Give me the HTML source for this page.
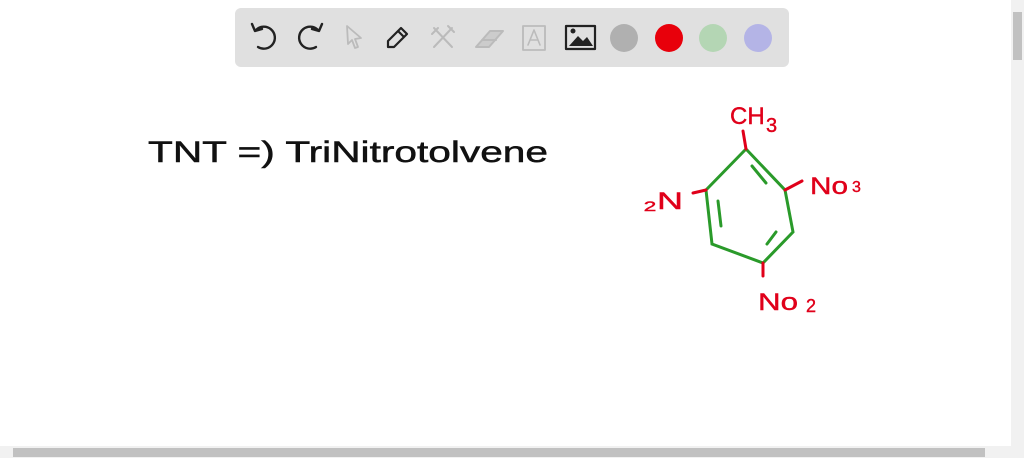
<!DOCTYPE html>
<html><head><style>
body{margin:0;width:1024px;height:458px;background:#fff;overflow:hidden;position:relative;font-family:"Liberation Sans",sans-serif}
.tb{position:absolute;left:235px;top:8px;width:554px;height:59px;background:#e0e0e0;border-radius:6px}
.vs{position:absolute;left:1011px;top:0;width:13px;height:446px;background:#f1f1f1}
.vt{position:absolute;left:1013px;top:12px;width:9px;height:48px;background:#c1c1c1}
.hs{position:absolute;left:0;top:446px;width:1024px;height:12px;background:#f1f1f1}
.ht{position:absolute;left:13px;top:448px;width:972px;height:9px;background:#c1c1c1}
</style></head><body>
<div class="tb"></div>
<svg width="1024" height="458" style="position:absolute;left:0;top:0">
<g fill="none" stroke-linecap="round" stroke-linejoin="round">
<path d="M256 30 A11 11 0 1 1 258 47" stroke="#222" stroke-width="2.4"/>
<path d="M252 24 L255 31 L262 29" stroke="#222" stroke-width="2.4"/>
<path d="M318 30 A11 11 0 1 0 316 47" stroke="#222" stroke-width="2.4"/>
<path d="M322 24 L319 31 L312 29" stroke="#222" stroke-width="2.4"/>
<path d="M347 26 L361 38 L355 39 L358 47 L355 48 L352 40 L348 44 Z" stroke="#bbb" stroke-width="1.8"/>
<path d="M388 47 L388 41 L401 28 L407 34 L394 47 Z M398 31 L404 37" stroke="#222" stroke-width="2.2"/>
<path d="M434 28 L452 47 M452 28 L434 47 M448 26 L454 32 M432 34 L438 28" stroke="#bbb" stroke-width="2"/>
<path d="M476 47 L490 31 L503 31 L489 47 Z M482 40 L496 40" stroke="#bbb" stroke-width="2" fill="#ccc"/>
<rect x="523" y="26" width="22" height="24" stroke="#bbb" stroke-width="1.8"/>
<path d="M528 45 L534 30 L540 45 M530 40 L538 40" stroke="#bbb" stroke-width="1.6"/>
<rect x="566" y="26" width="29" height="23" stroke="#222" stroke-width="2.2"/>
<path d="M569 46 L578 36 L583 41 L587 37 L593 46 Z" fill="#222"/>
<circle cx="573" cy="31" r="2.5" fill="#222"/>
</g>
<circle cx="624" cy="38" r="14" fill="#b0b0b0"/>
<circle cx="669" cy="38" r="14" fill="#e8000b"/>
<circle cx="713" cy="38" r="14" fill="#b4d6b4"/>
<circle cx="758" cy="38" r="14" fill="#b4b4e6"/>
<text x="148" y="162" font-family="Liberation Sans" font-size="30" fill="#111" stroke="#111" stroke-width="0.5" textLength="400" lengthAdjust="spacingAndGlyphs">TNT =) TriNitrotolvene</text>
<g fill="none" stroke="#2a9a2a" stroke-width="3" stroke-linecap="round">
<path d="M746 149 L785 190 L793 232 L763 263 L712 244 L706 190 Z"/>
<path d="M752 166 L766 183 M776 232 L767 244 M718 201 L721 226"/>
</g>
<g fill="none" stroke="#e0001a" stroke-width="3" stroke-linecap="round">
<path d="M746 149 L743 131 M785 190 L802 181 M706 190 L693 193 M763 263 L763 276"/>
</g>
<g fill="#e0001a" stroke="#e0001a" stroke-width="0.4" font-family="Liberation Sans">
<text x="730" y="124" font-size="24">CH</text><text x="766" y="132" font-size="20">3</text>
<text x="810" y="194" font-size="24" textLength="38" lengthAdjust="spacingAndGlyphs">No</text><text x="852" y="192" font-size="16">3</text>
<text x="643" y="209" font-size="24" textLength="40" lengthAdjust="spacingAndGlyphs">₂N</text>
<text x="758" y="310" font-size="24" textLength="40" lengthAdjust="spacingAndGlyphs">No</text><text x="806" y="312" font-size="18">2</text>
</g>
</svg>
<div class="vs"></div><div class="vt"></div>
<div class="hs"></div><div class="ht"></div>
</body></html>
